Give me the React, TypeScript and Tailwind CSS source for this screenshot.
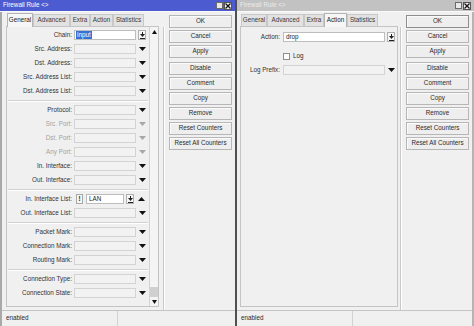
import React from 'react';

function Tri({ dir = 'down', color = '#111' }: { dir?: 'down' | 'up'; color?: string }) {
  return (
    <svg width="7" height="4" viewBox="0 0 7 4" className="block">
      <path d={dir === 'down' ? 'M0 0H7L3.5 4Z' : 'M0 4H7L3.5 0Z'} fill={color} />
    </svg>
  );
}

function SmallTri({ dir }: { dir: 'up' | 'down' }) {
  return (
    <svg width="5" height="4" viewBox="0 0 5 4" className="block">
      <path d={dir === 'down' ? 'M0 0H5L2.5 4Z' : 'M0 4H5L2.5 0Z'} fill="#111" />
    </svg>
  );
}

function DropBtn() {
  return (
    <div className="ml-[2px] w-[8px] h-[10px] border border-[#b0b0b0] bg-[#f7f7f7] flex items-center justify-center">
      <svg width="5" height="7" viewBox="0 0 5 7" className="block">
        <path d="M2 0H3V2H2Z" fill="#222" />
        <path d="M0 2H5L2.5 5Z" fill="#222" />
        <path d="M0 6H5V7H0Z" fill="#222" />
      </svg>
    </div>
  );
}

function Row({ label, disabled, labelW, children }: { label: string; disabled?: boolean; labelW: string; children?: React.ReactNode }) {
  return (
    <div className="h-[14px] flex items-center">
      <div className={`${labelW} text-right whitespace-nowrap ${disabled ? 'text-[#a2a2a2]' : 'text-[#333333]'}`}>{label}</div>
      {children}
    </div>
  );
}

function ComboRow({ label, disabled }: { label: string; disabled?: boolean }) {
  return (
    <Row label={label} disabled={disabled} labelW="w-[65px]">
      <div className="ml-[2px] w-[62px] h-[10px] border border-[#d3d3d3] bg-[#f2f2f2]" />
      <div className="ml-[3px]">
        <Tri color={disabled ? '#a8a8a8' : '#111'} />
      </div>
    </Row>
  );
}

function Sep() {
  return (
    <div className="h-[5px] flex items-center px-[1px]">
      <div className="w-full h-[2px] border-t border-[#d2d2d2] border-b border-b-[#ffffff]" />
    </div>
  );
}

function Btn({ children, def }: { children: React.ReactNode; def?: boolean }) {
  return (
    <div
      className={`h-[13px] w-[63px] flex items-center justify-center border ${def ? 'border-[#8e8e8e]' : 'border-[#b6b6b6]'} bg-[#eeeeee] text-[#2b2b2b] shadow-[inset_1px_1px_0_#fbfbfb] whitespace-nowrap`}
    >
      {children}
    </div>
  );
}

function Buttons({ defDark }: { defDark?: boolean }) {
  return (
    <div className="flex flex-col pt-[3px] gap-[2px]">
      <Btn def={defDark}>OK</Btn>
      <Btn>Cancel</Btn>
      <Btn>Apply</Btn>
      <div className="mt-[2px]">
        <Btn>Disable</Btn>
      </div>
      <Btn>Comment</Btn>
      <Btn>Copy</Btn>
      <Btn>Remove</Btn>
      <Btn>Reset Counters</Btn>
      <Btn>Reset All Counters</Btn>
    </div>
  );
}

function Tabs({ active }: { active: string }) {
  const tabs: [string, string][] = [
    ['General', 'w-[26px]'],
    ['Advanced', 'w-[37px]'],
    ['Extra', 'w-[20px]'],
    ['Action', 'w-[23px]'],
    ['Statistics', 'w-[31px]'],
  ];
  return (
    <div className="h-[13px] ml-[1px] flex items-end">
      {tabs.map(([t, w]) =>
        t === active ? (
          <div
            key={t}
            className={`${w} h-[14px] -mb-[1px] relative z-10 flex items-center justify-center bg-[#f6f6f6] border border-b-0 border-[#b4b4b4] text-[#222]`}
          >
            {t}
          </div>
        ) : (
          <div
            key={t}
            className={`${w} h-[12px] flex items-center justify-center bg-[#e2e2e2] border border-b-0 border-[#c8c8c8] text-[#3a3a3a]`}
          >
            {t}
          </div>
        )
      )}
    </div>
  );
}

function TitleBar({ active }: { active?: boolean }) {
  return (
    <div
      className={`h-[12px] flex items-center pl-[3px] pr-[3px] border-b border-[#fafafa] ${active ? 'bg-[#4c5cd0] text-[#ffffff]' : 'bg-[#c2c2c2] text-[#ebebeb]'}`}
    >
      <div className="flex-1 whitespace-nowrap">Firewall Rule &lt;&gt;</div>
      <div className="w-[7px] h-[7px] border border-[#6a6a6a] bg-[#e9e9e9]" />
      <div className="ml-[1px] w-[8px] h-[8px] border border-[#555] bg-[#f4f4f4] flex items-center justify-center">
        <svg width="6" height="6" viewBox="0 0 6 6" className="block">
          <path d="M0.5 0.5L5.5 5.5M5.5 0.5L0.5 5.5" stroke="#111" strokeWidth="1.3" />
        </svg>
      </div>
    </div>
  );
}

function StatusBar() {
  return (
    <div className="h-[16px] flex border-t border-[#c4c4c4] bg-[#f0f0f0]">
      <div className="w-[116px] pl-[4px] flex items-center border-r border-[#d2d2d2] text-[#2a2a2a]">enabled</div>
      <div className="flex-1" />
    </div>
  );
}

function VSep() {
  return <div className="mt-[15px] w-[2px] border-l border-[#c9c9c9] border-r border-r-[#ffffff]" />;
}

export default function App() {
  return (
    <div className="w-[474px] h-[326px] flex bg-[#f0f0f0] overflow-hidden font-['Liberation_Sans',Arial,sans-serif] text-[6.3px] leading-none">
      {/* Left window */}
      <div className="w-[237px] h-full flex flex-col border-r-2 border-[#505050]">
        <TitleBar active />
        <div className="flex-1 flex border-l-2 border-[#a9a9a9]">
          <div className="ml-[4px] w-[153px] flex flex-col pt-[1px]">
            <Tabs active="General" />
            <div className="h-[281px] border border-[#c4c4c4] bg-[#f0f0f0] flex">
              <div className="flex-1 flex flex-col pt-[1px]">
                <Row label="Chain:" labelW="w-[65px]">
                  <div className="ml-[2px] w-[62px] h-[10px] border border-[#bdbdbd] bg-[#ffffff] flex items-center pl-[1px]">
                    <span className="bg-[#3470d6] text-[#ffffff] px-[1px] h-[8px] flex items-center">input</span>
                  </div>
                  <DropBtn />
                </Row>
                <ComboRow label="Src. Address:" />
                <ComboRow label="Dst. Address:" />
                <ComboRow label="Src. Address List:" />
                <ComboRow label="Dst. Address List:" />
                <Sep />
                <ComboRow label="Protocol:" />
                <ComboRow label="Src. Port:" disabled />
                <ComboRow label="Dst. Port:" disabled />
                <ComboRow label="Any Port:" disabled />
                <ComboRow label="In. Interface:" />
                <ComboRow label="Out. Interface:" />
                <Sep />
                <Row label="In. Interface List:" labelW="w-[65px]">
                  <div className="ml-[4px] w-[7px] h-[10px] border border-[#a8a8a8] bg-[#f5f5f5] flex items-center justify-center font-bold text-[#222]">
                    !
                  </div>
                  <div className="ml-[3px] w-[38px] h-[10px] border border-[#bdbdbd] bg-[#ffffff] flex items-center pl-[2px] text-[#222]">
                    LAN
                  </div>
                  <DropBtn />
                  <div className="ml-[4px]">
                    <Tri dir="up" />
                  </div>
                </Row>
                <ComboRow label="Out. Interface List:" />
                <Sep />
                <ComboRow label="Packet Mark:" />
                <ComboRow label="Connection Mark:" />
                <ComboRow label="Routing Mark:" />
                <Sep />
                <ComboRow label="Connection Type:" />
                <ComboRow label="Connection State:" />
              </div>
              <div className="w-[9px] border-l border-[#d4d4d4] bg-[#f4f4f4] flex flex-col">
                <div className="h-[9px] flex items-center justify-center">
                  <SmallTri dir="up" />
                </div>
                <div className="flex-1" />
                <div className="h-[10px] bg-[#d0d0d0]" />
                <div className="h-[9px] flex items-center justify-center">
                  <SmallTri dir="down" />
                </div>
              </div>
            </div>
          </div>
          <div className="ml-[4px] flex">
            <VSep />
          </div>
          <div className="ml-[4px]">
            <Buttons />
          </div>
        </div>
        <div className="border-l-2 border-[#a9a9a9]">
          <StatusBar />
        </div>
      </div>

      {/* Right window */}
      <div className="flex-1 h-full flex flex-col">
        <TitleBar />
        <div className="flex-1 flex border-r-2 border-[#b4b4b4]">
          <div className="ml-[3px] w-[158px] flex flex-col pt-[1px]">
            <Tabs active="Action" />
            <div className="h-[281px] border border-[#c4c4c4] bg-[#f0f0f0] flex flex-col pt-[3px]">
              <Row label="Action:" labelW="w-[39px]">
                <div className="ml-[3px] w-[102px] h-[10px] border border-[#bdbdbd] bg-[#ffffff] flex items-center pl-[2px] text-[#222]">
                  drop
                </div>
                <DropBtn />
              </Row>
              <div className="mt-[5px] h-[14px] flex items-center pl-[42px]">
                <div className="w-[7px] h-[7px] border border-[#8e8e8e] bg-[#ffffff]" />
                <div className="ml-[3px] text-[#2c2c2c]">Log</div>
              </div>
              <Row label="Log Prefix:" labelW="w-[39px]">
                <div className="ml-[3px] w-[102px] h-[10px] border border-[#d3d3d3] bg-[#f2f2f2]" />
                <div className="ml-[3px]">
                  <Tri />
                </div>
              </Row>
            </div>
          </div>
          <div className="ml-[2px] flex">
            <VSep />
          </div>
          <div className="ml-[4px]">
            <Buttons defDark />
          </div>
        </div>
        <div className="border-r-2 border-[#b4b4b4]">
          <StatusBar />
        </div>
      </div>
    </div>
  );
}
